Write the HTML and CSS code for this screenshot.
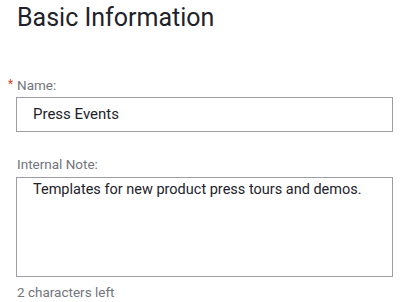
FILE: index.html
```html
<!DOCTYPE html>
<html>
<head>
<meta charset="utf-8">
<link rel="stylesheet" href="styles.css">
</head>
<body>
<div class="form">
  <h1 class="title">Basic Information</h1>
  <div class="field field-name">
    <label class="label"><span class="req">*</span>Name:</label>
    <div class="input">Press Events</div>
  </div>
  <div class="field field-note">
    <label class="label">Internal Note:</label>
    <div class="textarea">Templates for new product press tours and demos.</div>
    <div class="hint">2 characters left</div>
  </div>
</div>
</body>
</html>
```
FILE: styles.css
```css
html, body { margin: 0; padding: 0; background: #fff; }
body { font-family: Roboto, "Noto Sans", sans-serif; color: #1f2329; }
.form { padding: 3px 16px 0 16px; width: 377px; display: flex; flex-direction: column; }
.title { margin: 0 0 0 1px; font-size: 25px; font-weight: 400; line-height: 30px; color: #1e222a; }
.field { display: flex; flex-direction: column; }
.field-name { margin-top: 44px; }
.field-note { margin-top: 24px; }
.label { position: relative; font-size: 13.5px; line-height: 16px; color: #72757c; margin-left: 1px; margin-bottom: 4px; }
.field-note .label { margin-bottom: 5px; }
.req { position: absolute; left: -9px; top: -1px; color: #e0442a; font-size: 12px; }
.input { box-sizing: border-box; height: 35px; border: 1px solid #9c9ea3; padding: 0 0 0 16px; font-size: 15px; line-height: 33px; color: #1e222a; }
.textarea { box-sizing: border-box; height: 100px; border: 1px solid #9c9ea3; padding: 2px 0 0 16px; font-size: 14.5px; line-height: 20px; color: #1e222a; }
.hint { font-size: 13.5px; line-height: 16px; color: #72757c; margin: 7px 0 0 1px; }
```
